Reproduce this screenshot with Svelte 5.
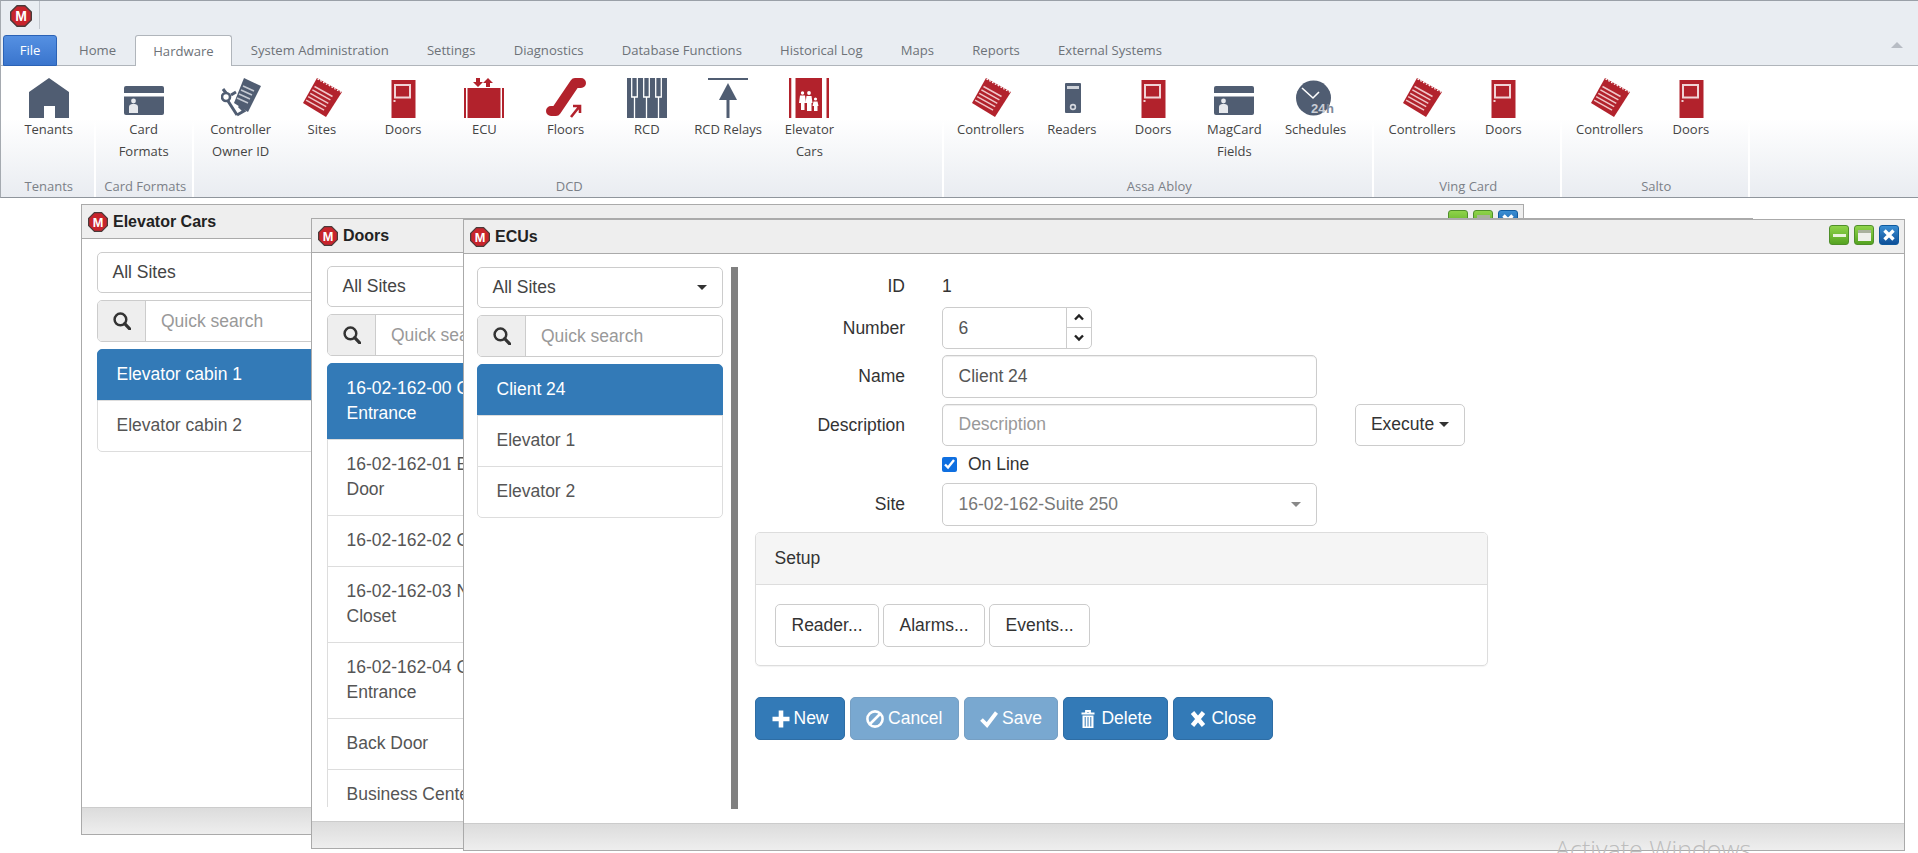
<script>
  const tabs = ['Home', 'Hardware', 'System Administration', 'Settings', 'Diagnostics', 'Database Functions', 'Historical Log', 'Maps', 'Reports', 'External Systems'];
  const groups = [
    { name: 'Tenants', width: 95, pad: 7, items: [['house', 'Tenants']] },
    { name: 'Card Formats', width: 98, pad: 7, items: [['card', 'Card\nFormats']] },
    { name: 'DCD', width: 750, pad: 6, items: [['owner', 'Controller\nOwner ID'], ['pad', 'Sites'], ['door', 'Doors'], ['ecu', 'ECU'], ['floors', 'Floors'], ['rcd', 'RCD'], ['relay', 'RCD Relays'], ['cars', 'Elevator\nCars']] },
    { name: 'Assa Abloy', width: 430, pad: 6, items: [['pad', 'Controllers'], ['reader', 'Readers'], ['door', 'Doors'], ['card', 'MagCard\nFields'], ['clock', 'Schedules']] },
    { name: 'Ving Card', width: 188, pad: 7.5, items: [['pad', 'Controllers'], ['door', 'Doors']] },
    { name: 'Salto', width: 188, pad: 7, items: [['pad', 'Controllers'], ['door', 'Doors']] }
  ];
  const padLines = [0, 1, 2, 3, 4];
  const doors = ['16-02-162-00 Client\nEntrance', '16-02-162-01 Back\nDoor', '16-02-162-02 Conference', '16-02-162-03 Network\nCloset', '16-02-162-04 Client\nEntrance', 'Back Door', 'Business Center'];
</script>

{#snippet logo(cls)}
  <svg class={cls} viewBox="0 0 22 22" aria-hidden="true">
    <polygon points="7,0.7 15,0.7 21.3,7 21.3,15 15,21.3 7,21.3 0.7,15 0.7,7" fill="#c8242c" stroke="#4a3a3a" stroke-width="1.4" stroke-linejoin="round" />
    <text x="11" y="16.2" text-anchor="middle" class="logo-m">M</text>
  </svg>
{/snippet}

{#snippet icon(name)}
  <svg class="ric" viewBox="0 0 40 40" aria-hidden="true">
    {#if name === 'house'}
      <path d="M20 0 L40 14 V40 H26 V28 H15 V40 H0 V14 Z" fill="#505d72" />
    {:else if name === 'card'}
      <rect y="8" width="40" height="29" rx="2" fill="#505d72" />
      <rect y="15" width="40" height="3.5" fill="#fff" />
      <circle cx="9.5" cy="23" r="2.4" fill="#e6e8ec" />
      <path d="M5 35 V29 Q5 26.5 8 26 H11 Q14 26.5 14 29 V35 Z" fill="#e6e8ec" />
    {:else if name === 'owner'}
      <g transform="translate(2 0)">
        <polygon points="21,0 38,8 25,34 11,25" fill="#505d72" />
        <g stroke="#c5cad3" stroke-width="1.6">
          <line x1="20" y1="8" x2="31" y2="13" /><line x1="18" y1="12" x2="29" y2="17" /><line x1="16" y1="16" x2="27" y2="21" /><line x1="14" y1="20" x2="25" y2="25" />
        </g>
        <circle cx="3" cy="19" r="4" fill="#fff" stroke="#505d72" stroke-width="2.6" />
        <path d="M5 23 L14 37 M0 11 L3 15 M8 17 L13 14 M14 37 L21 33 L16 28" fill="none" stroke="#505d72" stroke-width="3" />
      </g>
    {:else if name === 'pad'}
      <polygon points="15,0 40,14 24,39 1,25" fill="#b2222c" />
      <line x1="15.5" y1="1" x2="39.5" y2="14.5" stroke="#fff" stroke-width="1.2" stroke-dasharray="1.6 1.6" />
      {#each padLines as i}
        <line x1={12.5 - i * 2.1} y1={8.5 + i * 3.4} x2={30.5 - i * 2.1} y2={18.5 + i * 3.4} stroke="#f0c6c9" stroke-width="1.5" />
      {/each}
    {:else if name === 'door'}
      <rect x="8.5" y="2" width="24" height="38" fill="#b2222c" />
      <rect x="12" y="7" width="15" height="12.5" fill="none" stroke="#f0d3d5" stroke-width="2" />
      <rect x="10.5" y="22" width="2" height="2" fill="#f0d3d5" />
    {:else if name === 'ecu'}
      <path d="M0 10 H2 V40 H0 Z M3.5 10 H36.5 V40 H3.5 Z M38 10 H40 V40 H38 Z" fill="#b2222c" />
      <path d="M12 0 H16 V4 H19 L14 9 L9 4 H12 Z M22 9 H26 V5 H29 L24 0 L19 5 H22 Z" fill="#b2222c" />
    {:else if name === 'floors'}
      <path d="M5 33 H10 L29 5 H35" fill="none" stroke="#b2222c" stroke-width="10" stroke-linecap="round" stroke-linejoin="round" />
      <path d="M25 39 L33 29 M27 28 H34 V35" fill="none" stroke="#b2222c" stroke-width="2.6" />
    {:else if name === 'rcd'}
      <rect width="40" height="40" fill="#505d72" />
      {#each [7.5, 19.5, 31.5] as x}
        <path d={`M${x - 2.8} 0 V19 H${x + 2.8} V0 M${x} 19 V40`} fill="none" stroke="#fff" stroke-width="1.3" />
      {/each}
    {:else if name === 'relay'}
      <rect width="40" height="2" fill="#505d72" />
      <polygon points="20,5 29,22 11,22" fill="#505d72" />
      <rect x="18.5" y="21" width="3" height="19" fill="#505d72" />
    {:else if name === 'cars'}
      <path d="M0 0 H2.3 V40 H0 Z M6.5 0 H33 V40 H6.5 Z M37.5 0 H40 V40 H37.5 Z" fill="#b2222c" />
      <g fill="#fff">
        <circle cx="13.5" cy="15" r="1.7" /><path d="M11 17.5 H16 L17 25 H15.5 V32 H12 V25 H10 Z" />
        <circle cx="20" cy="15" r="1.9" /><path d="M17.5 18 H22.5 L23.5 25 H22.5 V33 H18 V25 H16.5 Z" />
        <circle cx="26.5" cy="21" r="1.6" /><path d="M24.5 23.5 H28.5 L29.5 28 H28.5 V33 H25 V28 H23.5 Z" />
      </g>
    {:else if name === 'reader'}
      <rect x="13" y="5" width="16" height="30" rx="1" fill="#505d72" />
      <rect x="15" y="8" width="12" height="3" fill="#cfd3da" />
      <circle cx="21" cy="29" r="2.4" fill="none" stroke="#d5d8de" stroke-width="1.6" />
    {:else}
      <circle cx="17.5" cy="20" r="17.5" fill="#505d72" />
      <path d="M6 10 L17 20 L23 14" fill="none" stroke="#fff" stroke-width="1.6" />
      <text x="15" y="35" class="t24">24</text>
      <text x="30" y="35" class="t24h">h</text>
    {/if}
  </svg>
{/snippet}

{#snippet winButtons()}
  <div class="wbtns">
    <span class="wb green"><i class="bar"></i></span>
    <span class="wb green"><i class="box"></i></span>
    <span class="wb blue">
      <svg viewBox="0 0 14 14" aria-hidden="true"><path d="M2.5 2.5 L11.5 11.5 M11.5 2.5 L2.5 11.5" stroke="#fff" stroke-width="3.4" /></svg>
    </span>
  </div>
{/snippet}

{#snippet side(items, caret)}
  <div class="field sel">All Sites{#if caret}<span class="caret"></span>{/if}</div>
  <div class="search">
    <span class="addon">
      <svg viewBox="0 0 16 16" aria-hidden="true"><circle cx="6.6" cy="6.6" r="5.2" fill="none" stroke="#333" stroke-width="2.2" /><path d="M10.4 10.4 L14.8 15" stroke="#333" stroke-width="2.8" stroke-linecap="round" /></svg>
    </span>
    <span class="ph">Quick search</span>
  </div>
  <div class="list">
    {#each items as item, i}
      <div class="li" class:active={i === 0}>{item}</div>
    {/each}
  </div>
{/snippet}

<div class="page">
  <header class="ribbon">
    <div class="qat">{@render logo('qlogo')}<span class="qsep"></span></div>
    <nav class="tabs">
      <span class="file">File</span>
      {#each tabs as t}
        <span class="tab" class:on={t === 'Hardware'}>{t}</span>
      {/each}
      <span class="collapse"></span>
    </nav>
    <div class="panel">
      {#each groups as g}
        <section class="group" style="width:{g.width}px">
          <div class="items" style="padding-left:{g.pad}px">
            {#each g.items as it}
              <div class="rb">{@render icon(it[0])}<span>{it[1]}</span></div>
            {/each}
          </div>
          <div class="gname">{g.name}</div>
        </section>
      {/each}
    </div>
  </header>

  <section class="win w1">
    <div class="wh">{@render logo('wlogo')}<span class="wt">Elevator Cars</span>{@render winButtons()}</div>
    <div class="wb-body"><div class="col">{@render side(['Elevator cabin 1', 'Elevator cabin 2'], false)}</div></div>
    <div class="wf"></div>
  </section>

  <section class="win w2">
    <div class="wh">{@render logo('wlogo')}<span class="wt">Doors</span>{@render winButtons()}</div>
    <div class="wb-body"><div class="col">{@render side(doors, false)}</div></div>
    <div class="wf"></div>
  </section>

  <section class="win w3">
    <div class="wh">{@render logo('wlogo')}<span class="wt">ECUs</span>{@render winButtons()}</div>
    <div class="wb-body">
      <div class="col">{@render side(['Client 24', 'Elevator 1', 'Elevator 2'], true)}</div>
      <div class="split"></div>
      <div class="main">
        <div class="form">
          <label class="lbl idl">ID</label><div class="idv">1</div>
          <label class="lbl">Number</label>
          <div class="field num">
            <span class="numv">6</span>
            <span class="spin">
              <b><svg viewBox="0 0 12 8" aria-hidden="true"><path d="M2 6.5 L6 2.5 L10 6.5" fill="none" stroke="#222" stroke-width="2.4" /></svg></b>
              <b><svg viewBox="0 0 12 8" aria-hidden="true"><path d="M2 1.5 L6 5.5 L10 1.5" fill="none" stroke="#222" stroke-width="2.4" /></svg></b>
            </span>
          </div>
          <label class="lbl">Name</label><input class="field inp" value="Client 24" />
          <label class="lbl">Description</label>
          <div class="descrow">
            <input class="field inp" placeholder="Description" />
            <button class="btn exec">Execute <span class="caret small"></span></button>
          </div>
          <span></span>
          <div class="check"><input type="checkbox" checked /><span>On Line</span></div>
          <label class="lbl">Site</label>
          <div class="field sel site">16-02-162-Suite 250<span class="caret gray"></span></div>
        </div>
        <div class="setup">
          <div class="sh">Setup</div>
          <div class="sb">
            <button class="btn">Reader...</button>
            <button class="btn">Alarms...</button>
            <button class="btn">Events...</button>
          </div>
        </div>
        <div class="actions">
          <button class="btn pri">
            <svg viewBox="0 0 18 18" aria-hidden="true"><path d="M9 0.5 V17.5 M0.5 9 H17.5" stroke="#fff" stroke-width="4.6" /></svg>New
          </button>
          <button class="btn pri dis">
            <svg viewBox="0 0 18 18" aria-hidden="true"><circle cx="9" cy="9" r="7.6" fill="none" stroke="#fff" stroke-width="2.6" /><path d="M4 14 L14 4" stroke="#fff" stroke-width="2.6" /></svg>Cancel
          </button>
          <button class="btn pri dis">
            <svg viewBox="0 0 18 18" aria-hidden="true"><path d="M1.5 9.5 L7 15 L16.5 2.5" fill="none" stroke="#fff" stroke-width="3.8" /></svg>Save
          </button>
          <button class="btn pri">
            <svg viewBox="0 0 18 18" aria-hidden="true"><path d="M2.5 3.5 H15.5 M7 3 V1 H11 V3" fill="none" stroke="#fff" stroke-width="1.8" /><path d="M3.5 5.5 H14.5 V18 H3.5 Z" fill="#fff" /><path d="M6.2 7 V16.5 M9 7 V16.5 M11.8 7 V16.5" stroke="#337ab7" stroke-width="1" /></svg>Delete
          </button>
          <button class="btn pri">
            <svg viewBox="0 0 18 18" aria-hidden="true"><path d="M3.5 2.5 L14.5 15.5 M14.5 2.5 L3.5 15.5" stroke="#fff" stroke-width="4.4" /></svg>Close
          </button>
        </div>
      </div>
    </div>
    <div class="wf"></div>
  </section>

  <div class="activate">Activate Windows</div>
</div>

<style>
  :global(html), :global(body) { margin: 0; overflow: hidden; background: #fff; }
  * { box-sizing: border-box; }
  .page { position: relative; width: 1918px; height: 853px; overflow: hidden; background: #fff; font-family: "Liberation Sans", Arial, sans-serif; font-size: 17.5px; line-height: 25px; color: #333; }

  .ribbon { position: relative; height: 198px; background: #e9edf2; border-top: 1px solid #9aa0a8; border-bottom: 1px solid #8f959c; border-left: 1px solid #a5aab0; font-family: "Open Sans", sans-serif; font-size: 13px; }
  .qat { height: 34px; display: flex; align-items: flex-start; }
  .qlogo { width: 22px; height: 22px; margin: 4px 0 0 9px; }
  .qsep { width: 1px; height: 28px; margin-left: 7px; background: #c3c8cf; }
  .logo-m { font: 700 14px "Liberation Sans", sans-serif; fill: #fff; }

  .tabs { position: relative; display: flex; height: 31px; padding-left: 2px; border-bottom: 1px solid #b0b5bb; font-size: 13.1px; }
  .file { width: 54px; height: 31px; display: flex; align-items: center; justify-content: center; margin-right: 3px; background: linear-gradient(#5590e2, #3a75cd); border: 1px solid #2b62b5; border-radius: 3px 3px 0 0; color: #fff; }
  .tab { padding: 0 19.1px; height: 30px; line-height: 30px; color: #6d7278; white-space: nowrap; }
  .tab.on { height: 31px; padding: 0 17px; margin: 0; background: #fff; border: 1px solid #b0b5bb; border-bottom: 0; border-radius: 3px 3px 0 0; }
  .collapse { position: absolute; left: 1890px; top: 7px; border: 6.5px solid transparent; border-top: 0; border-bottom: 6px solid #b7bcc4; }

  .panel { display: flex; height: 131px; background: linear-gradient(#fff 0, #fff 40%, #e9ecf1 100%); }
  .group { display: flex; flex-direction: column; justify-content: space-between; padding-top: 12px; border-right: 2px solid; border-image: linear-gradient(transparent 38%, #fff 48%) 1; flex: none; }
  .items { display: flex; }
  .rb { width: 81.25px; display: flex; flex-direction: column; align-items: center; text-align: center; color: #444; line-height: 22px; white-space: pre-line; }
  .ric { width: 40px; height: 40px; display: block; }
  .t24 { font: 700 13px "Liberation Sans", sans-serif; fill: #c9ced6; }
  .t24h { font: 700 13px "Liberation Sans", sans-serif; fill: #7d8899; }
  .gname { text-align: center; color: #7b8087; line-height: 22px; padding-left: 2.5px; }

  .win { position: absolute; display: flex; flex-direction: column; background: #fff; border: 1px solid #aaa; }
  .w1 { left: 81px; top: 204px; width: 1443px; height: 631px; }
  .w2 { left: 311px; top: 218px; width: 1442px; height: 631px; }
  .w3 { left: 463px; top: 219px; width: 1442px; height: 632px; }
  .wh { position: relative; flex: none; height: 34px; display: flex; align-items: center; padding-left: 6px; background: #eee; border-bottom: 1px solid #aaa; }
  .wlogo { width: 20px; height: 20px; flex: none; }
  .wt { margin-left: 5px; font-weight: 700; font-size: 16px; color: #222; }
  .wbtns { position: absolute; right: 5px; top: 5px; display: flex; gap: 5px; }
  .wb { width: 20px; height: 20px; display: flex; align-items: center; justify-content: center; border-radius: 3px; }
  .wb.green { background: linear-gradient(#8fd44a, #55a321); border: 1px solid #4f8f2a; }
  .wb.blue { background: linear-gradient(#3b8fd4, #0e4f98); border: 1px solid #0f5a9e; }
  .wb svg { width: 14px; height: 14px; }
  .bar { display: block; width: 13px; height: 3px; background: #e9f3dc; }
  .box { display: block; width: 13px; height: 11px; background: #eef0ea; border-top: 3px solid #a9b19c; }
  .wb-body { flex: 1; min-height: 0; display: flex; padding: 12.5px 0 14px 13px; overflow: hidden; }
  .w1 .wb-body, .w2 .wb-body { padding-left: 15px; }
  .wf { flex: none; height: 27px; background: linear-gradient(#dcdcdc, #eee); border-top: 1px solid #ccc; }

  .col { flex: none; width: 245.5px; display: flex; flex-direction: column; overflow: hidden; }
  .field { display: block; font: inherit; height: 42.5px; line-height: 40.5px; border: 1px solid #ccc; border-radius: 5px; background: #fff; padding: 0 14.5px; color: #555; }
  input.field { width: 375px; color: #555; box-shadow: inset 0 1px 1px rgba(0,0,0,.075); outline: none; padding: 0 15.5px; }
  input.field::placeholder { color: #999; opacity: 1; }
  .num { padding: 0 25px 0 15.5px; }
  .sel { position: relative; flex: none; height: 41.5px; line-height: 39.5px; color: #444; }
  .caret { position: absolute; right: 15px; top: 50%; margin-top: -2px; border: 5px solid transparent; border-top: 5px solid #333; border-bottom: 0; }
  .caret.small { position: static; display: inline-block; margin: 0 0 3px 0; vertical-align: middle; }
  .caret.gray { border-top-color: #888; }
  .search { flex: none; display: flex; height: 42.5px; margin-top: 6.5px; border: 1px solid #ccc; border-radius: 5px; overflow: hidden; }
  .addon { flex: none; width: 48px; display: flex; align-items: center; justify-content: center; background: #eee; border-right: 1px solid #ccc; }
  .addon svg { width: 18px; height: 18px; }
  .ph { padding-left: 15px; line-height: 40.5px; color: #999; white-space: nowrap; }
  .list { margin-top: 6.5px; flex: 1; min-height: 0; overflow: hidden; }
  .li { padding: 12.5px 18.5px; border: 1px solid #ddd; margin-bottom: -1px; background: #fff; color: #555; white-space: pre-line; }
  .li:last-child { border-radius: 0 0 5px 5px; }
  .li.active { background: #337ab7; border-color: #337ab7; color: #fff; border-radius: 5px 5px 0 0; }
  .split { flex: none; width: 7px; margin-left: 8.5px; background: #808080; }
  .main { flex: none; width: 733px; margin-left: 17px; }

  .form { display: grid; grid-template-columns: 150px 1fr; column-gap: 37px; row-gap: 6px; }
  .lbl { text-align: right; line-height: 42.5px; color: #333; }
  .idl, .idv { line-height: 25px; padding-top: 7.5px; height: 34px; }
  .num { position: relative; width: 150px; }
  .numv { color: #555; }
  .spin { position: absolute; right: 0; top: 0; bottom: 0; width: 25px; display: flex; flex-direction: column; border-left: 1px solid #ccc; }
  .spin b { flex: 1; display: flex; align-items: center; justify-content: center; }
  .spin b + b { border-top: 1px solid #ccc; }
  .spin svg { width: 12px; height: 8px; }
  .descrow { display: flex; gap: 38px; }
  .check { display: flex; align-items: center; height: 25px; }
  .check input { width: 15px; height: 15px; margin: 0 11px 0 0; accent-color: #0f6fe0; }
  .site { width: 375px; height: 42.5px; line-height: 40.5px; color: #777; padding: 0 15.5px; }
  .setup { margin-top: 6.5px; height: 134px; border: 1px solid #ddd; border-radius: 5px; box-shadow: 0 1px 1px rgba(0,0,0,.05); }
  .sh { height: 51.5px; line-height: 50px; padding: 0 18.5px; background: #f5f5f5; border-bottom: 1px solid #ddd; border-radius: 4px 4px 0 0; }
  .sb { display: flex; gap: 4px; padding: 19.5px 19px; }
  .btn { height: 42.5px; padding: 0 15.5px; background: #fff; border: 1px solid #ccc; border-radius: 5px; font: inherit; color: #333; white-space: nowrap; }
  .exec { flex: none; width: 110px; padding: 0; }
  .actions { display: flex; gap: 4.5px; margin-top: 31.3px; }
  .pri { display: flex; align-items: center; gap: 4px; background: #337ab7; border-color: #2e6da4; color: #fff; padding: 0 15.5px; }
  .pri svg { width: 18px; height: 18px; flex: none; }
  .dis { opacity: .65; }

  .activate { position: absolute; left: 1555px; top: 833px; font: 300 25px "Open Sans", sans-serif; line-height: 32px; color: #bdbdbd; white-space: nowrap; }
</style>
